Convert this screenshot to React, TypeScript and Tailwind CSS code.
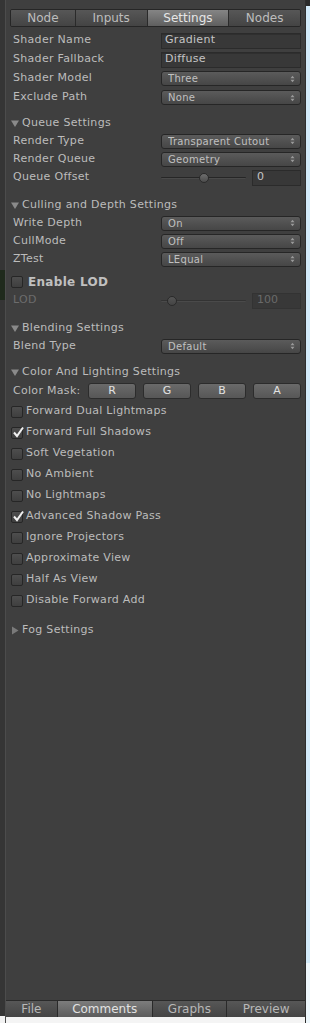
import React from 'react';

const font = { fontFamily: '"DejaVu Sans", Verdana, sans-serif' };

function Tabs({ items, active, widths }: { items: string[]; active: string; widths: string[] }) {
  return (
    <div className="flex h-[18px] border border-[#262626] rounded-[2px] overflow-hidden">
      {items.map((t, i) => (
        <div
          key={t}
          className={`${widths[i]} flex items-center justify-center text-[12px] border-r border-[#2a2a2a] last:border-r-0 ${
            t === active
              ? 'bg-gradient-to-b from-[#858585] to-[#5f5f5f] text-[#e6e6e6]'
              : 'bg-gradient-to-b from-[#575757] to-[#444444] text-[#bdbdbd]'
          }`}
        >
          {t}
        </div>
      ))}
    </div>
  );
}

function Arrows() {
  return (
    <svg width="5" height="8" viewBox="0 0 5 8" className="shrink-0">
      <path d="M0.5 3.2 L2.5 0.8 L4.5 3.2 Z" fill="#9a9a9a" />
      <path d="M0.5 4.8 L2.5 7.2 L4.5 4.8 Z" fill="#9a9a9a" />
    </svg>
  );
}

function Dropdown({ value }: { value: string }) {
  return (
    <div className="w-[140px] h-[15px] rounded-[3px] border border-[#262626] bg-gradient-to-b from-[#5b5b5b] to-[#464646] flex items-center pl-[6px] pr-[5px] text-[10px] tracking-[0.3px] text-[#c0c0c0]">
      <span className="flex-1 truncate">{value}</span>
      <Arrows />
    </div>
  );
}

function TextField({ value }: { value: string }) {
  return (
    <div className="w-[140px] h-[16px] border border-[#2b2b2b] bg-[#383838] shadow-[inset_0_1px_0_#2f2f2f] flex items-center pl-[3px] text-[11px] tracking-[0.3px] text-[#c4c4c4]">
      {value}
    </div>
  );
}

function Slider({ pos, value, dim }: { pos: number; value: string; dim?: boolean }) {
  return (
    <div className="w-[140px] flex items-center">
      <div className="relative w-[85px] h-[12px] flex items-center">
        <div className={`w-full h-[2px] rounded ${dim ? 'bg-[#333333]' : 'bg-[#262626]'} border-b border-[#4a4a4a]`} />
        <div
          className={`absolute top-[1px] w-[10px] h-[10px] rounded-full ${
            dim ? 'bg-gradient-to-b from-[#555555] to-[#444444]' : 'bg-gradient-to-b from-[#6e6e6e] to-[#4c4c4c]'
          } border border-[#2a2a2a]`}
          style={{ left: pos }}
        />
      </div>
      <div
        className={`ml-[6px] flex-1 h-[16px] border ${dim ? 'border-[#333333] text-[#6a6a6a]' : 'border-[#2b2b2b] text-[#c4c4c4]'} bg-[#383838] flex items-center pl-[4px] text-[11px]`}
      >
        {value}
      </div>
    </div>
  );
}

function Row({ label, h = 'h-[19px]', dim, children }: { label: string; h?: string; dim?: boolean; children: React.ReactNode }) {
  return (
    <div className={`${h} flex items-center justify-between pl-[7px]`}>
      <span className={`text-[11px] tracking-[0.3px] ${dim ? 'text-[#6c6c6c]' : 'text-[#bcbcbc]'}`}>{label}</span>
      {children}
    </div>
  );
}

function Header({ label, open = true, mt, h = 'h-[17px]' }: { label: string; open?: boolean; mt: string; h?: string }) {
  return (
    <div className={`${mt} ${h} flex items-center pl-[5px] text-[11px] tracking-[0.3px] text-[#bcbcbc]`}>
      {open ? (
        <svg width="9" height="9" viewBox="0 0 9 9" className="mr-[2px]">
          <path d="M0 1.5 H8 L4 8 Z" fill="#8a8a8a" />
        </svg>
      ) : (
        <svg width="9" height="9" viewBox="0 0 9 9" className="mr-[2px]">
          <path d="M1 0.5 V8.5 L7.5 4.5 Z" fill="#7a7a7a" />
        </svg>
      )}
      {label}
    </div>
  );
}

function Box({ checked }: { checked?: boolean }) {
  return (
    <div className="relative w-[12px] h-[12px] rounded-[2px] border border-[#262626] bg-gradient-to-b from-[#4e4e4e] to-[#3f3f3f] shrink-0">
      {checked && (
        <svg width="13" height="13" viewBox="0 0 13 13" className="absolute -top-[2px] left-0">
          <path d="M2 6.5 L5 10 L11 1.5" stroke="#f0f0f0" strokeWidth="2" fill="none" />
        </svg>
      )}
    </div>
  );
}

function Check({ label, checked }: { label: string; checked?: boolean }) {
  return (
    <div className="h-[21px] flex items-center pl-[5px]">
      <Box checked={checked} />
      <span className="ml-[3px] text-[11px] tracking-[0.3px] text-[#bcbcbc]">{label}</span>
    </div>
  );
}

function MaskBtn({ c }: { c: string }) {
  return (
    <div className="w-[48px] h-[16px] rounded-[3px] border border-[#2c2c2c] bg-gradient-to-b from-[#6a6a6a] to-[#575757] flex items-center justify-center text-[11px] text-[#e2e2e2]">
      {c}
    </div>
  );
}

export default function App() {
  const checks: [string, boolean][] = [
    ['Forward Dual Lightmaps', false],
    ['Forward Full Shadows', true],
    ['Soft Vegetation', false],
    ['No Ambient', false],
    ['No Lightmaps', false],
    ['Advanced Shadow Pass', true],
    ['Ignore Projectors', false],
    ['Approximate View', false],
    ['Half As View', false],
    ['Disable Forward Add', false],
  ];

  return (
    <div className="w-[310px] h-[1023px] flex bg-[#383838] overflow-hidden" style={font}>
      {/* left strip (graph canvas behind) */}
      <div className="w-[5px] flex flex-col bg-[#353535]">
        <div className="h-[270px]" />
        <div className="h-[30px] bg-[#1f2a1c]" />
        <div className="flex-1" />
        <div className="h-[7px] bg-[#f2f2f2]" />
      </div>

      {/* main panel */}
      <div className="w-[300px] flex flex-col border-l border-[#4c4c4c] bg-[#3f3f3f]">
        <div className="px-[4px] pt-[9px]">
          <Tabs
            items={['Node', 'Inputs', 'Settings', 'Nodes']}
            active="Settings"
            widths={['w-[65px]', 'w-[72px]', 'w-[82px]', 'w-[71px]']}
          />
        </div>

        <div className="pr-[4px] pt-[4px] flex flex-col">
          <Row label="Shader Name"><TextField value="Gradient" /></Row>
          <Row label="Shader Fallback"><TextField value="Diffuse" /></Row>
          <Row label="Shader Model"><Dropdown value="Three" /></Row>
          <Row label="Exclude Path"><Dropdown value="None" /></Row>

          <Header label="Queue Settings" mt="mt-[8px]" />
          <Row label="Render Type" h="h-[18px]"><Dropdown value="Transparent Cutout" /></Row>
          <Row label="Render Queue" h="h-[18px]"><Dropdown value="Geometry" /></Row>
          <Row label="Queue Offset"><Slider pos={38} value="0" /></Row>

          <Header label="Culling and Depth Settings" mt="mt-[10px]" />
          <Row label="Write Depth" h="h-[18px]"><Dropdown value="On" /></Row>
          <Row label="CullMode" h="h-[18px]"><Dropdown value="Off" /></Row>
          <Row label="ZTest" h="h-[18px]"><Dropdown value="LEqual" /></Row>

          <div className="mt-[5px] h-[18px] flex items-center pl-[5px]">
            <Box />
            <span className="ml-[5px] text-[12px] font-bold tracking-[0.3px] text-[#c0c0c0]">Enable LOD</span>
          </div>
          <Row label="LOD" dim><Slider pos={6} value="100" dim /></Row>

          <Header label="Blending Settings" mt="mt-[10px]" />
          <Row label="Blend Type" h="h-[18px]"><Dropdown value="Default" /></Row>

          <Header label="Color And Lighting Settings" mt="mt-[9px]" />
          <div className="h-[20px] flex items-center pl-[7px]">
            <span className="text-[11px] tracking-[0.3px] text-[#bcbcbc] w-[80px]">Color Mask:</span>
            <div className="flex gap-[7px]">
              <MaskBtn c="R" />
              <MaskBtn c="G" />
              <MaskBtn c="B" />
              <MaskBtn c="A" />
            </div>
          </div>

          {checks.map(([l, c]) => (
            <Check key={l} label={l} checked={c} />
          ))}

          <Header label="Fog Settings" open={false} mt="mt-[10px]" h="h-[18px]" />
        </div>

        <div className="flex-1" />

        <div className="flex h-[17px] border-t border-[#2a2a2a]">
          {[
            ['File', 'w-[52px]'],
            ['Comments', 'w-[95px]'],
            ['Graphs', 'w-[75px]'],
            ['Preview', 'w-[78px]'],
          ].map(([t, w]) => (
            <div
              key={t}
              className={`${w} flex items-center justify-center text-[12px] border-r border-[#2a2a2a] last:border-r-0 ${
                t === 'Comments'
                  ? 'bg-gradient-to-b from-[#7d7d7d] to-[#5c5c5c] text-[#e2e2e2]'
                  : 'bg-gradient-to-b from-[#575757] to-[#444444] text-[#b8b8b8]'
              }`}
            >
              {t}
            </div>
          ))}
        </div>
        <div className="h-[6px] bg-[#f4f4f4]" />
      </div>

      {/* right strip */}
      <div className="w-[5px] flex flex-col border-l border-[#2e2e2e]">
        <div className="h-[6px] bg-[#2b2b2b]" />
        <div className="flex-1 bg-[#d3ebfa]" />
        <div className="h-[60px] bg-[#eef7fc]" />
      </div>
    </div>
  );
}
